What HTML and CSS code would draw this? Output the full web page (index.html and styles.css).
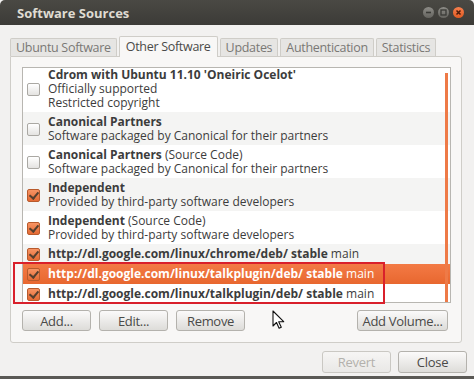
FILE: index.html
```html
<!DOCTYPE html>
<html lang="en">
<head>
    <meta charset="UTF-8">
    <title>Software Sources</title>
    <link rel="stylesheet" href="styles.css">
</head>
<body>
    <div class="window">
        <div class="titlebar">
            <span class="title">Software Sources</span>
            <div class="controls">
                <span class="ctl min"><svg width="11" height="11" viewBox="0 0 11 11"><path d="M3 5.5h5" stroke="#3a3a36" stroke-width="1.6"/></svg></span>
                <span class="ctl max"><svg width="11" height="11" viewBox="0 0 11 11"><rect x="3" y="3" width="5" height="5" fill="none" stroke="#3a3a36" stroke-width="1.3"/></svg></span>
                <span class="ctl close"><svg width="11" height="11" viewBox="0 0 11 11"><path d="M3.5 3.5l4 4M7.5 3.5l-4 4" stroke="#4a1a0a" stroke-width="1.5"/></svg></span>
            </div>
        </div>

        <div class="content">
            <div class="tabs">
                <div class="tab">Ubuntu Software</div>
                <div class="tab active">Other Software</div>
                <div class="tab">Updates</div>
                <div class="tab">Authentication</div>
                <div class="tab">Statistics</div>
            </div>

            <div class="notebook">
                <div class="list">
                    <div class="rows">
                        <div class="row">
                            <span class="check"></span>
                            <div class="text">
                                <div><b>Cdrom with Ubuntu 11.10 'Oneiric Ocelot'</b></div>
                                <div>Officially supported</div>
                                <div>Restricted copyright</div>
                            </div>
                        </div>
                        <div class="row alt">
                            <span class="check"></span>
                            <div class="text">
                                <div><b>Canonical Partners</b></div>
                                <div>Software packaged by Canonical for their partners</div>
                            </div>
                        </div>
                        <div class="row">
                            <span class="check"></span>
                            <div class="text">
                                <div><b>Canonical Partners</b> (Source Code)</div>
                                <div>Software packaged by Canonical for their partners</div>
                            </div>
                        </div>
                        <div class="row alt">
                            <span class="check on"></span>
                            <div class="text">
                                <div><b>Independent</b></div>
                                <div>Provided by third-party software developers</div>
                            </div>
                        </div>
                        <div class="row">
                            <span class="check on"></span>
                            <div class="text">
                                <div><b>Independent</b> (Source Code)</div>
                                <div>Provided by third-party software developers</div>
                            </div>
                        </div>
                        <div class="row alt single">
                            <span class="check on"></span>
                            <div class="text"><div><b>http://dl.google.com/linux/chrome/deb/ stable</b> main</div></div>
                        </div>
                        <div class="row selected single">
                            <span class="check on"></span>
                            <div class="text"><div><b>http://dl.google.com/linux/talkplugin/deb/ stable</b> main</div></div>
                        </div>
                        <div class="row single">
                            <span class="check on"></span>
                            <div class="text"><div><b>http://dl.google.com/linux/talkplugin/deb/ stable</b> main</div></div>
                        </div>
                    </div>
                    <div class="scrollbar"></div>
                </div>

                <div class="list-buttons">
                    <button class="btn">Add...</button>
                    <button class="btn">Edit...</button>
                    <button class="btn">Remove</button>
                    <button class="btn volume">Add Volume...</button>
                </div>
            </div>

            <div class="dialog-buttons">
                <button class="btn wide" disabled>Revert</button>
                <button class="btn wide">Close</button>
            </div>
        </div>
        <div class="bottom-edge"></div>
    </div>

    <div class="highlight"></div>
    <svg class="cursor" width="14" height="20" viewBox="0 0 14 20">
        <path d="M1 1v15l3.5-3.5 2.6 5.8 2.2-1-2.6-5.6h5z" fill="#fff" stroke="#111" stroke-width="1.1" stroke-linejoin="round"/>
    </svg>
</body>
</html>
```

FILE: styles.css
```css
* {
    box-sizing: border-box;
}

body {
    margin: 0;
    font-family: "Open Sans", "Noto Sans", sans-serif;
    font-size: 12px;
    color: #3c3c3c;
    background: #2e2d2a;
}

.window {
    width: 474px;
    height: 379px;
    display: flex;
    flex-direction: column;
    background: #f2f1f0;
}

.titlebar {
    height: 25px;
    flex: none;
    display: flex;
    align-items: center;
    justify-content: space-between;
    padding: 0 10px 0 17px;
    background: linear-gradient(#4a4944, #3c3b37);
    border-radius: 5px 5px 0 0;
}

.title {
    font-weight: bold;
    font-size: 13px;
    color: #dfdbd2;
}

.controls {
    display: flex;
    gap: 4px;
}

.ctl {
    width: 11px;
    height: 11px;
    border-radius: 50%;
    display: flex;
    background: linear-gradient(#8d8c87, #65645f);
}

.ctl.close {
    background: linear-gradient(#f7804e, #e05a22);
}

.content {
    flex: 1;
    display: flex;
    flex-direction: column;
    padding: 12px 12px 0 10px;
}

.tabs {
    display: flex;
    align-items: flex-end;
    gap: 2px;
    height: 19px;
    position: relative;
    z-index: 1;
}

.tab {
    height: 18px;
    line-height: 17px;
    padding: 0 5px;
    border: 1px solid #cfcdc8;
    border-bottom: none;
    border-radius: 2px 2px 0 0;
    background: #e6e5e3;
    color: #7a7875;
    font-size: 12.5px;
    letter-spacing: -0.3px;
}

.tab.active {
    height: 21px;
    line-height: 20px;
    background: #f8f7f6;
    color: #4a4a48;
    margin-bottom: -1px;
    padding: 0 6px;
}

.notebook {
    height: 287px;
    flex: none;
    border: 1px solid #cfcdc8;
    border-radius: 0 3px 3px 3px;
    background: #f8f7f6;
    padding: 10px 10px 0 11px;
    display: flex;
    flex-direction: column;
}

.list {
    position: relative;
    height: 236px;
    flex: none;
    border: 1px solid #b8b6b1;
    background: #fff;
    overflow: hidden;
}

.rows {
    margin-top: -3px;
}

.row {
    display: flex;
    align-items: center;
    gap: 8px;
    padding: 3px 0 2px 4px;
    line-height: 14px;
    color: #3c3c3c;
}

.row.single {
    padding: 3px 0 3px 4px;
}

.row.alt {
    background: #f4f4f3;
}

.row.selected {
    background: linear-gradient(#f37a45, #e8672f);
    color: #fff;
}

.text {
    white-space: nowrap;
}

.text div {
    height: 14px;
}

.check {
    flex: none;
    width: 13px;
    height: 13px;
    border: 1px solid #aaa8a3;
    border-radius: 2px;
    background: linear-gradient(#ffffff, #e4e3e1);
    position: relative;
}

.check.on {
    border-color: #b85a2c;
    background: linear-gradient(#f79464, #e46a34);
}

.check.on::after {
    content: "";
    position: absolute;
    left: 3px;
    top: 0;
    width: 4px;
    height: 7px;
    border: solid #55402f;
    border-width: 0 2px 2px 0;
    transform: rotate(40deg);
}

.scrollbar {
    position: absolute;
    right: 2px;
    top: 5px;
    bottom: 0;
    width: 3px;
    background: #ee7a47;
}

.list-buttons {
    display: flex;
    gap: 8px;
    margin-top: 7px;
}

.btn {
    font-family: "Open Sans", "Noto Sans", sans-serif;
    font-size: 13px;
    color: #4a4a48;
    height: 21px;
    width: 69px;
    padding: 0;
    border: 1px solid #b4b2ad;
    border-radius: 3px;
    background: linear-gradient(#fbfafa, #dddcd9);
    letter-spacing: -0.3px;
}

.btn.volume {
    width: 91px;
    margin-left: auto;
    margin-right: 3px;
}

.btn:disabled {
    color: #b3b1ac;
    background: linear-gradient(#f6f5f4, #e9e8e6);
    border-color: #cac8c3;
}

.dialog-buttons {
    display: flex;
    justify-content: flex-end;
    gap: 7px;
    margin: 8px -5px 0 0;
}

.btn.wide {
    height: 22px;
}

.bottom-edge {
    height: 3px;
    flex: none;
    background: #5a5955;
}

.highlight {
    position: absolute;
    left: 13px;
    top: 262px;
    width: 372px;
    height: 42px;
    border: 2px solid #d9202b;
}

.cursor {
    position: absolute;
    left: 272px;
    top: 310px;
}
```
